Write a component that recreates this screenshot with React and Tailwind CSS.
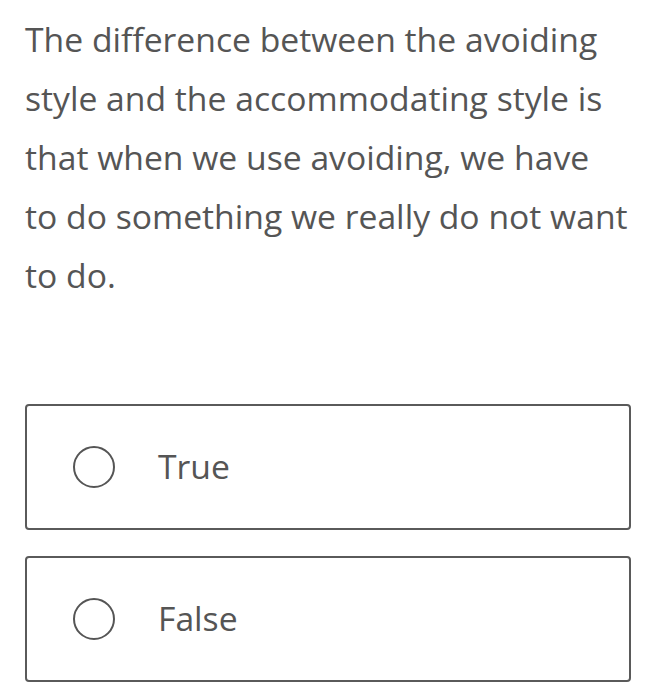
export default function App() {
  const options = ['True', 'False'];
  return (
    <div
      className="min-h-screen bg-white text-[#555555] px-[25px] pt-[10px]"
      style={{ fontFamily: '"Open Sans", "Liberation Sans", sans-serif' }}
    >
      <p className="text-[33.7px] leading-[59px] whitespace-nowrap">
        The difference between the avoiding
        <br />
        style and the accommodating style is
        <br />
        that when we use avoiding, we have
        <br />
        to do something we really do not want
        <br />
        to do.
      </p>
      <div className="mt-[99px] flex flex-col gap-[26px] w-[606px]">
        {options.map((opt) => (
          <div
            key={opt}
            className="h-[126px] border-2 border-[#5a5a5a] rounded-[4px] flex items-center pl-[46px]"
          >
            <span className="w-[42px] h-[42px] rounded-full border-2 border-[#555]" />
            <span className="ml-[43px] text-[33.7px] leading-none">{opt}</span>
          </div>
        ))}
      </div>
    </div>
  );
}
